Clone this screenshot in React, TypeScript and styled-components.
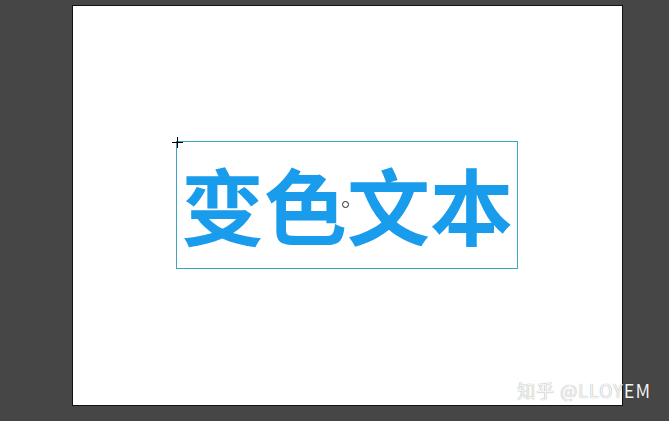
import React from "react";
import styled, { createGlobalStyle } from "styled-components";

const GlobalStyle = createGlobalStyle`
  html, body {
    margin: 0;
    padding: 0;
    background: #464646;
    width: 669px;
    height: 421px;
    overflow: hidden;
  }
`;

const Stage = styled.div`
  position: relative;
  width: 669px;
  height: 421px;
  padding: 5px 0 0 72px;
  box-sizing: border-box;
  background: #464646;
`;

const Artboard = styled.div`
  width: 551px;
  height: 401px;
  box-sizing: border-box;
  background: #ffffff;
  border: 1px solid #111;
  padding: 135px 0 0 103px;
`;

const TextFrame = styled.div`
  position: relative;
  width: 342px;
  height: 128px;
  box-sizing: border-box;
  border: 1px solid #3aa6c4;
  display: flex;
  align-items: center;
  justify-content: center;
`;

const Word = styled.span`
  font-family: "Noto Sans CJK SC", "Noto Sans", sans-serif;
  font-weight: 700;
  font-size: 83px;
  line-height: 1;
  color: #1a9cec;
  margin-top: -3px;
`;

const Cross = styled.svg`
  position: absolute;
  left: -5px;
  top: -5px;
`;

const Pivot = styled.div`
  position: absolute;
  left: 165px;
  top: 59px;
  width: 7px;
  height: 7px;
  border: 1px solid #222;
  border-radius: 50%;
  background: #fff;
  box-sizing: border-box;
`;

const Watermark = styled.div`
  position: absolute;
  right: 18px;
  bottom: 18px;
  font-family: "Noto Sans CJK SC", "Noto Sans", sans-serif;
  font-size: 18px;
  color: #f4f4f4;
  text-shadow: 0 0 1px rgba(0, 0, 0, 0.45);
  letter-spacing: 1px;
`;

export default function App() {
  return (
    <>
      <GlobalStyle />
      <Stage>
        <Artboard>
          <TextFrame>
            <Cross width="11" height="11" viewBox="0 0 11 11">
              <path d="M5.5 0V11M0 5.5H11" stroke="#000" strokeWidth="1" />
            </Cross>
            <Word>变色文本</Word>
            <Pivot />
          </TextFrame>
        </Artboard>
        <Watermark>知乎 @LLOYEM</Watermark>
      </Stage>
    </>
  );
}
